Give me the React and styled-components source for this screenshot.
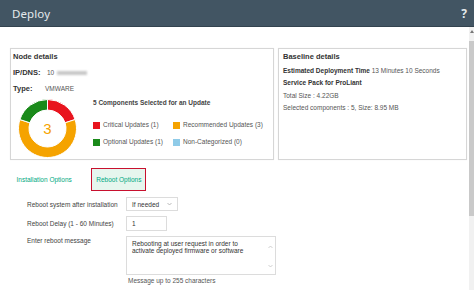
import React from "react";
import styled, { createGlobalStyle } from "styled-components";

const Global = createGlobalStyle`
  html, body { margin: 0; padding: 0; background: #fff; }
  body { font-family: "Liberation Sans", Arial, sans-serif; width: 474px; height: 290px; overflow: hidden; }
  * { box-sizing: border-box; }
`;

const Page = styled.div`
  width: 474px;
  height: 290px;
  display: flex;
  flex-direction: column;
`;

const Header = styled.div`
  height: 27px;
  flex: none;
  background: #425563;
  border-bottom: 1px solid #33434f;
  display: flex;
  align-items: center;
  justify-content: space-between;
  padding: 0 7px 0 12px;
  color: #e4e9ec;
`;

const Title = styled.div`
  font-family: "Noto Sans", "Open Sans", sans-serif;
  font-size: 11.5px;
  letter-spacing: 0.1px;
`;

const Help = styled.div`
  font-family: "Noto Sans", sans-serif;
  font-weight: 700;
  font-size: 12px;
`;

const Body = styled.div`
  flex: 1;
  display: flex;
  min-height: 0;
`;

const Content = styled.div`
  flex: 1;
  padding: 21px 2px 0 10px;
  display: flex;
  flex-direction: column;
`;

const Track = styled.div`
  width: 5px;
  flex: none;
  background: #f1f1f1;
  display: flex;
  flex-direction: column;
  align-items: center;
`;

const Arrow = styled.div`
  width: 0;
  height: 0;
  margin-top: 3px;
  border-left: 2px solid transparent;
  border-right: 2px solid transparent;
  border-bottom: 3px solid #777;
`;

const Thumb = styled.div`
  width: 5px;
  margin-top: 8px;
  height: 175px;
  background: #c9c9c9;
`;

const Panels = styled.div`
  display: flex;
  gap: 4px;
  height: 112px;
`;

const Panel = styled.div`
  width: ${(p) => p.$w}px;
  border: 1px solid #d6d6d6;
  box-shadow: 0 0 1px rgba(0,0,0,0.08);
  padding: 2px 4px 0 ${(p) => p.$pl}px;
  color: #333;
`;

const PanelTitle = styled.div`
  font-weight: 700;
  font-size: 7.5px;
  line-height: 12px;
  color: #333;
  margin-bottom: ${(p) => p.$mb}px;
`;

const InfoRow = styled.div`
  display: flex;
  align-items: center;
  line-height: 12px;
  margin-bottom: 4px;
`;

const InfoLabel = styled.span`
  font-weight: 700;
  font-size: 7.5px;
  width: ${(p) => p.$w}px;
  color: #333;
`;

const InfoValue = styled.span`
  color: #555;
  font-size: 6.5px;
`;

const Blur = styled.span`
  display: inline-block;
  width: 30px;
  height: 4px;
  margin-left: 3px;
  background: #c8c8c8;
  filter: blur(1.2px);
`;

const Chart = styled.div`
  display: flex;
  align-items: flex-start;
  padding-left: 5px;
`;

const DonutWrap = styled.div`
  position: relative;
  width: 59px;
  height: 59px;
  flex: none;
`;

const DonutNum = styled.div`
  position: absolute;
  inset: 0;
  display: flex;
  align-items: center;
  justify-content: center;
  color: #f5a300;
  font-size: 15px;
`;

const Legend = styled.div`
  margin-left: 16px;
  margin-top: -2px;
  display: flex;
  flex-direction: column;
`;

const LegendHead = styled.div`
  font-size: 6.5px;
  font-weight: 700;
  color: #444;
  line-height: 12px;
  margin-bottom: 10px;
  white-space: nowrap;
`;

const LegendGrid = styled.div`
  display: grid;
  grid-template-columns: 80px auto;
  row-gap: 5px;
`;

const LegendItem = styled.div`
  display: flex;
  align-items: center;
  gap: 3px;
  font-size: 6.5px;
  line-height: 12px;
  color: #555;
  white-space: nowrap;
`;

const Swatch = styled.span`
  width: 7px;
  height: 7px;
  background: ${(p) => p.$c};
`;

const Line = styled.div`
  font-size: 6.5px;
  line-height: 12.4px;
  color: #555;
  white-space: nowrap;
  & b { color: #333; }
`;

const Tabs = styled.div`
  display: flex;
  align-items: center;
  margin-top: 8px;
  height: 23px;
  padding-left: 7px;
`;

const Tab = styled.div`
  font-size: 6.5px;
  color: #01a982;
  height: 23px;
  display: flex;
  align-items: center;
  padding: 0 4px;
  margin-right: ${(p) => (p.$active ? 0 : 14.5)}px;
  margin-left: ${(p) => (p.$active ? 0 : -5.5)}px;
  border: ${(p) => (p.$active ? "1.5px solid #c8102e" : "1.5px solid transparent")};
  background: ${(p) => (p.$active ? "#e6f6ee" : "transparent")};
  white-space: nowrap;
`;

const Form = styled.div`
  display: grid;
  grid-template-columns: 99px auto;
  padding-left: 17px;
  margin-top: 6px;
  row-gap: 5px;
  align-items: center;
`;

const Label = styled.div`
  font-size: 6.5px;
  color: #444;
  align-self: ${(p) => (p.$top ? "start" : "center")};
  padding-top: ${(p) => (p.$top ? 1 : 0)}px;
  white-space: nowrap;
`;

const Select = styled.div`
  width: 52px;
  height: 14px;
  border: 1px solid #dcdcdc;
  display: flex;
  align-items: center;
  justify-content: space-between;
  padding: 0 5px 0 5px;
  font-size: 6.5px;
  color: #333;
`;

const Chevron = styled.svg`
  width: 5px;
  height: 4px;
`;

const Input = styled.div`
  width: 41px;
  height: 15px;
  border: 1px solid #dcdcdc;
  display: flex;
  align-items: center;
  padding-left: 5px;
  font-size: 6.5px;
  color: #333;
`;

const TextArea = styled.div`
  position: relative;
  width: 150px;
  height: 39px;
  border: 1px solid #dcdcdc;
  padding: 3px 5px;
  font-size: 6.5px;
  line-height: 7px;
  color: #333;
`;

const AreaArrows = styled.div`
  position: absolute;
  right: 2px;
  top: 8px;
  bottom: 6px;
  display: flex;
  flex-direction: column;
  justify-content: space-between;
`;

const Hint = styled.div`
  grid-column: 2;
  font-size: 6.5px;
  color: #555;
  margin-top: -3px;
  padding-left: 2px;
`;

function Donut() {
  const cx = 29.5, cy = 29.5, R = 29, r = 18.5;
  const pt = (rad, deg) => {
    const a = ((deg - 90) * Math.PI) / 180;
    return [cx + rad * Math.cos(a), cy + rad * Math.sin(a)];
  };
  const seg = (a0, a1) => {
    const large = a1 - a0 > 180 ? 1 : 0;
    const [x0, y0] = pt(R, a0);
    const [x1, y1] = pt(R, a1);
    const [x2, y2] = pt(r, a1);
    const [x3, y3] = pt(r, a0);
    return `M${x0} ${y0} A${R} ${R} 0 ${large} 1 ${x1} ${y1} L${x2} ${y2} A${r} ${r} 0 ${large} 0 ${x3} ${y3} Z`;
  };
  const segs = [
    [0, 72, "#e8141e"],
    [72, 288, "#f5a300"],
    [288, 360, "#1a8a1a"],
  ];
  return (
    <DonutWrap>
      <svg width="59" height="59" viewBox="0 0 59 59">
        {segs.map(([a, b, c]) => (
          <path key={c} d={seg(a, b)} fill={c} stroke="#fff" strokeWidth="1" />
        ))}
      </svg>
      <DonutNum>3</DonutNum>
    </DonutWrap>
  );
}

export default function App() {
  return (
    <Page>
      <Global />
      <Header>
        <Title>Deploy</Title>
        <Help>?</Help>
      </Header>
      <Body>
        <Content>
          <Panels>
            <Panel $w={264} $pl={2}>
              <PanelTitle $mb={4}>Node details</PanelTitle>
              <InfoRow>
                <InfoLabel $w={34}>IP/DNS:</InfoLabel>
                <InfoValue>10</InfoValue>
                <Blur />
              </InfoRow>
              <InfoRow>
                <InfoLabel $w={32}>Type:</InfoLabel>
                <InfoValue>VMWARE</InfoValue>
              </InfoRow>
              <Chart>
                <Donut />
                <Legend>
                  <LegendHead>5 Components Selected for an Update</LegendHead>
                  <LegendGrid>
                    <LegendItem><Swatch $c="#e8141e" />Critical Updates (1)</LegendItem>
                    <LegendItem><Swatch $c="#f5a300" />Recommended Updates (3)</LegendItem>
                    <LegendItem><Swatch $c="#1a8a1a" />Optional Updates (1)</LegendItem>
                    <LegendItem><Swatch $c="#8fcbe8" />Non-Categorized (0)</LegendItem>
                  </LegendGrid>
                </Legend>
              </Chart>
            </Panel>
            <Panel $w={189} $pl={4}>
              <PanelTitle $mb={2}>Baseline details</PanelTitle>
              <Line><b>Estimated Deployment Time</b> 13 Minutes 10 Seconds</Line>
              <Line><b>Service Pack for ProLiant</b></Line>
              <Line>Total Size : 4.22GB</Line>
              <Line>Selected components : 5, Size: 8.95 MB</Line>
            </Panel>
          </Panels>
          <Tabs>
            <Tab>Installation Options</Tab>
            <Tab $active>Reboot Options</Tab>
          </Tabs>
          <Form>
            <Label>Reboot system after installation</Label>
            <Select>
              If needed
              <Chevron viewBox="0 0 5 4"><path d="M0.5 1 L2.5 3 L4.5 1" fill="none" stroke="#aaa" strokeWidth="0.8" /></Chevron>
            </Select>
            <Label>Reboot Delay (1 - 60 Minutes)</Label>
            <Input>1</Input>
            <Label $top>Enter reboot message</Label>
            <TextArea>
              Rebooting at user request in order to<br />activate deployed firmware or software
              <AreaArrows>
                <Chevron viewBox="0 0 5 4"><path d="M0.5 3 L2.5 1 L4.5 3" fill="none" stroke="#bbb" strokeWidth="0.7" /></Chevron>
                <Chevron viewBox="0 0 5 4"><path d="M0.5 1 L2.5 3 L4.5 1" fill="none" stroke="#bbb" strokeWidth="0.7" /></Chevron>
              </AreaArrows>
            </TextArea>
            <Hint>Message up to 255 characters</Hint>
          </Form>
        </Content>
        <Track>
          <Arrow />
          <Thumb />
        </Track>
      </Body>
    </Page>
  );
}
